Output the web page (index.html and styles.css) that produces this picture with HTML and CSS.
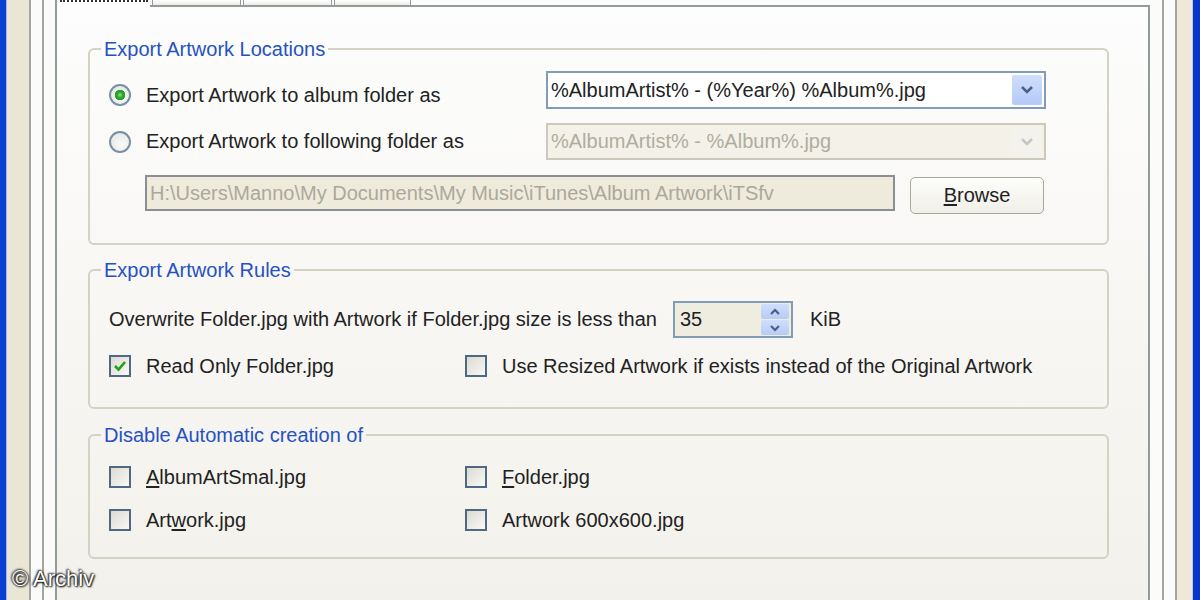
FILE: index.html
```html
<!DOCTYPE html>
<html>
<head>
<meta charset="utf-8">
<link rel="stylesheet" href="styles.css">
</head>
<body>
<div class="window">
  <div class="frame frame-outer">
    <div class="frame frame-inner">
      <div class="tabs">
        <div class="tab tab-active"><span class="focus"></span></div>
        <div class="tab"></div>
        <div class="tab"></div>
        <div class="tab tab-last"></div>
      </div>
      <div class="panel">
        <fieldset class="group g1">
          <legend>Export Artwork Locations</legend>
          <div class="row r1">
            <div class="choice"><span class="radio checked"></span><span>Export Artwork to album folder as</span></div>
            <div class="combo">
              <span class="combo-text">%AlbumArtist% - (%Year%) %Album%.jpg</span>
              <span class="combo-btn"><svg width="14" height="10" viewBox="0 0 14 10"><path d="M2 2 L7 7 L12 2" stroke="#4a5f8a" stroke-width="2.6" fill="none"/></svg></span>
            </div>
          </div>
          <div class="row r2">
            <div class="choice"><span class="radio"></span><span>Export Artwork to following folder as</span></div>
            <div class="combo disabled">
              <span class="combo-text">%AlbumArtist% - %Album%.jpg</span>
              <span class="combo-btn"><svg width="14" height="10" viewBox="0 0 14 10"><path d="M2 2 L7 7 L12 2" stroke="#c9c7ba" stroke-width="2.6" fill="none"/></svg></span>
            </div>
          </div>
          <div class="row r3">
            <div class="path">H:\Users\Manno\My Documents\My Music\iTunes\Album Artwork\iTSfv</div>
            <div class="btn"><span><u>B</u>rowse</span></div>
          </div>
        </fieldset>

        <fieldset class="group g2">
          <legend>Export Artwork Rules</legend>
          <div class="row r-over">
            <span>Overwrite Folder.jpg with Artwork if Folder.jpg size is less than</span>
            <div class="spin">
              <span class="spin-val">35</span>
              <span class="spin-btns">
                <span><svg width="12" height="8" viewBox="0 0 12 8"><path d="M2 6 L6 2 L10 6" stroke="#4a5f8a" stroke-width="2.2" fill="none"/></svg></span>
                <span><svg width="12" height="8" viewBox="0 0 12 8"><path d="M2 2 L6 6 L10 2" stroke="#4a5f8a" stroke-width="2.2" fill="none"/></svg></span>
              </span>
            </div>
            <span class="unit">KiB</span>
          </div>
          <div class="checks r-rules">
            <div class="check-row"><span class="checkbox checked"><svg width="16" height="16" viewBox="0 0 16 16"><path d="M3 8 L6.5 11.5 L13 4" stroke="#21a121" stroke-width="2.6" fill="none"/></svg></span><span>Read Only Folder.jpg</span></div>
            <div class="check-row"><span class="checkbox"></span><span>Use Resized Artwork if exists instead of the Original Artwork</span></div>
          </div>
        </fieldset>

        <fieldset class="group g3">
          <legend>Disable Automatic creation of</legend>
          <div class="checks r-disable">
            <div class="check-row"><span class="checkbox"></span><span><u>A</u>lbumArtSmal.jpg</span></div>
            <div class="check-row"><span class="checkbox"></span><span><u>F</u>older.jpg</span></div>
            <div class="check-row"><span class="checkbox"></span><span>Art<u>w</u>ork.jpg</span></div>
            <div class="check-row"><span class="checkbox"></span><span>Artwork 600x600.jpg</span></div>
          </div>
        </fieldset>
      </div>
    </div>
  </div>
  <div class="watermark">© Archiv</div>
</div>
</body>
</html>
```

FILE: styles.css
```css
* { box-sizing: border-box; }
html, body { margin: 0; height: 100%; overflow: hidden; }
body {
  font-family: "Liberation Sans", Arial, sans-serif;
  font-size: 20px;
  color: #222;
  background: #ebe8d8;
}
u { text-decoration-thickness: 2px; text-underline-offset: 2px; }

.window {
  position: relative;
  width: 1200px;
  height: 600px;
  display: flex;
  background: linear-gradient(to right, #e9e6d5, #eee8d8);
  border-left: 6px solid #0b3fd4;
  border-right: 7px solid #0a36c8;
  box-shadow: inset 1px 0 0 #9cb5ee, inset -1px 0 0 #b8c8ef;
  padding-left: 23px;
  padding-right: 16px;
}

.frame {
  flex: 1;
  display: flex;
  border-left: 2px solid #a2a5a0;
  border-right: 2px solid #a2a5a0;
  background: #fbfbfa;
  padding: 0 11px;
}
.frame-inner {
  flex-direction: column;
  padding-right: 12px;
}

.tabs { display: flex; height: 5px; flex: none; }
.tab {
  width: 89px;
  height: 5px;
  margin-left: 2px;
  border-left: 1px solid #919b9c;
  border-right: 1px solid #919b9c;
  background: linear-gradient(#ffffff, #ecebe4);
}
.tab-last { width: 77px; }
.tab-active {
  width: 95px;
  height: 7px;
  margin: 0 0 -2px 0;
  position: relative;
  z-index: 1;
  border-left: 2px solid #919b9c;
  border-right: none;
  background: #fdfdfd;
  padding: 0 2px 0 3px;
}
.focus { display: block; border-top: 2px dotted #333; }

.panel {
  flex: 1;
  border: 2px solid #919b9c;
  border-bottom: none;
  background: linear-gradient(#fdfdfd, #f3f1eb 590px);
  padding-top: 30px;
}

.group {
  margin: 0 39px 0 31px;
  border: 2px solid #d5d2c4;
  border-radius: 6px;
  padding: 0 19px;
  min-width: 0;
}
.group legend {
  color: #2552c2;
  padding: 0 3px;
  margin-left: -8px;
  height: 24px;
  line-height: 24px;
}
.g1 { padding-bottom: 29px; }
.g2 { margin-top: 13px; padding-bottom: 22px; }
.g3 { margin-top: 14px; padding-bottom: 18px; }

.row { display: flex; align-items: center; white-space: nowrap; }
.r1 { margin-top: 10px; height: 38px; }
.r2 { margin-top: 14px; height: 37px; }
.r3 { margin-top: 15px; align-items: flex-start; }

.choice { width: 437px; display: flex; align-items: center; gap: 15px; }
.r1 .choice { padding-top: 10px; }

.radio {
  flex: none;
  width: 22px;
  height: 22px;
  border-radius: 50%;
  border: 2px solid #7b8fa6;
  background: radial-gradient(circle at 60% 65%, #fbfbf9, #dfe3e4);
}
.radio.checked {
  background:
    radial-gradient(circle, #8fe08f 0, #2aa52a 3px, #21a121 5px, transparent 5.5px),
    radial-gradient(circle at 60% 65%, #fbfbf9, #dfe3e4);
}

.combo {
  width: 500px;
  height: 38px;
  border: 2px solid #7f9db9;
  background: #fff;
  display: flex;
  align-items: center;
  padding: 2px 2px 2px 3px;
}
.r2 .combo { height: 37px; }
.combo-text { flex: 1; overflow: hidden; }
.combo-btn {
  width: 30px;
  align-self: stretch;
  background: linear-gradient(#d0defc, #b3c9f7);
  border-radius: 2px;
  display: flex;
  align-items: center;
  justify-content: center;
}
.combo.disabled { border-color: #cbc9bc; background: #f4f2e8; color: #b0ad9e; }
.combo.disabled .combo-btn { background: #f3f2ed; }

.path {
  margin-left: 36px;
  width: 750px;
  height: 36px;
  border: 2px solid #8a8f93;
  background: #eeebdc;
  color: #aca899;
  padding-left: 3px;
  line-height: 32px;
  overflow: hidden;
}
.btn {
  margin-left: 15px;
  margin-top: 2px;
  width: 134px;
  height: 37px;
  border: 1px solid #aaa898;
  border-radius: 5px;
  background: linear-gradient(#fdfdfb, #f0efe8);
  display: flex;
  align-items: center;
  justify-content: center;
}

.r-over { margin-top: 19px; height: 37px; }
.spin {
  margin-left: 16px;
  width: 120px;
  height: 37px;
  border: 2px solid #7f9db9;
  background: #efece0;
  display: flex;
  align-items: center;
  padding: 1px 2px 1px 5px;
}
.spin-val { flex: 1; }
.spin-btns {
  width: 28px;
  align-self: stretch;
  display: flex;
  flex-direction: column;
  gap: 1px;
}
.spin-btns span {
  flex: 1;
  background: linear-gradient(#d0defc, #b6cbf7);
  border-radius: 2px;
  display: flex;
  align-items: center;
  justify-content: center;
}
.unit { margin-left: 17px; }

.checks { display: grid; grid-template-columns: 356px auto; white-space: nowrap; }
.r-rules { margin-top: 9px; }
.r-disable { margin-top: 11px; row-gap: 5px; }
.check-row { height: 38px; display: flex; align-items: center; gap: 15px; }
.checkbox {
  flex: none;
  width: 22px;
  height: 22px;
  border: 2px solid #4f6884;
  background: linear-gradient(135deg, #dcdbd2, #f8f8f5);
  display: flex;
  align-items: center;
  justify-content: center;
}

.watermark {
  position: absolute;
  left: 6px;
  top: 566px;
  color: #fff;
  font-size: 22px;
  text-shadow: 0 0 2px #000, 1px 1px 2px #000, -1px -1px 2px #333;
}
```
